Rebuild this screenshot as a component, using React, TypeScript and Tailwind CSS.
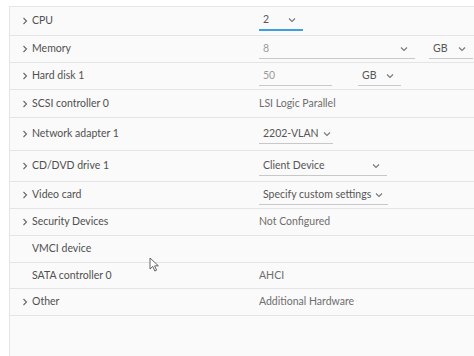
import React from 'react';

const Chevron = ({ className = '' }: { className?: string }) => (
  <svg width="8" height="6" viewBox="0 0 8 6" className={className}>
    <path d="M1 1.5 L4 4.5 L7 1.5" fill="none" stroke="currentColor" strokeWidth="1.1" />
  </svg>
);

const Caret = () => (
  <svg width="6" height="8" viewBox="0 0 6 8" className="text-[#666]">
    <path d="M1.5 1 L4.5 4 L1.5 7" fill="none" stroke="currentColor" strokeWidth="1.1" />
  </svg>
);

const Select = ({ value, width, active = false, muted = false }: { value: string; width: string; active?: boolean; muted?: boolean }) => (
  <div
    className={`flex shrink-0 items-center justify-between whitespace-nowrap pl-1 pr-[7px] h-[19px] ${width} ${
      active ? 'border-b-2 border-[#3f9fe0]' : 'border-b border-[#c8c8c8]'
    }`}
  >
    <span className={muted ? 'text-[#9a9a9a]' : 'text-[#565656]'}>{value}</span>
    <Chevron className="text-[#777] ml-1 shrink-0" />
  </div>
);

const Input = ({ value, width }: { value: string; width: string }) => (
  <div className={`flex shrink-0 items-center pl-1 h-[19px] ${width} border-b border-[#c8c8c8] text-[#9a9a9a]`}>{value}</div>
);

type Row = { label: string; h: string; expand: boolean; value: React.ReactNode };

const rows: Row[] = [
  { label: 'CPU', h: 'h-[29px]', expand: true, value: <Select value="2" width="w-[44px]" active /> },
  {
    label: 'Memory',
    h: 'h-[27px]',
    expand: true,
    value: (
      <div className="flex items-center gap-[14px]">
        <Select value="8" width="w-[156px]" muted />
        <Select value="GB" width="w-[44px]" />
      </div>
    ),
  },
  {
    label: 'Hard disk 1',
    h: 'h-[27px]',
    expand: true,
    value: (
      <div className="flex items-center gap-[26px]">
        <Input value="50" width="w-[73px]" />
        <Select value="GB" width="w-[43px]" />
      </div>
    ),
  },
  { label: 'SCSI controller 0', h: 'h-[28px]', expand: true, value: <span className="text-[#6e6e6e]">LSI Logic Parallel</span> },
  { label: 'Network adapter 1', h: 'h-[33px]', expand: true, value: <Select value="2202-VLAN" width="w-[74px]" /> },
  { label: 'CD/DVD drive 1', h: 'h-[31px]', expand: true, value: <Select value="Client Device" width="w-[128px]" /> },
  { label: 'Video card', h: 'h-[27px]', expand: true, value: <Select value="Specify custom settings" width="w-[129px]" /> },
  { label: 'Security Devices', h: 'h-[27px]', expand: true, value: <span className="text-[#6e6e6e]">Not Configured</span> },
  { label: 'VMCI device', h: 'h-[27px]', expand: false, value: null },
  { label: 'SATA controller 0', h: 'h-[26px]', expand: false, value: <span className="text-[#6e6e6e]">AHCI</span> },
  { label: 'Other', h: 'h-[27px]', expand: true, value: <span className="text-[#6e6e6e]">Additional Hardware</span> },
];

const App = () => {
  return (
    <div className="w-[474px] h-[356px] bg-white pl-[9px] pt-[6px] overflow-hidden relative" style={{ fontFamily: 'Lato, "Open Sans", sans-serif' }}>
      <div className="h-[400px] bg-[#fafafa] border-l border-t border-[#e6e6e6] text-[10.5px] text-[#505050]">
        {rows.map((r) => (
          <div key={r.label} className={`flex items-center whitespace-nowrap ${r.h} border-b border-[#e4e4e4]`}>
            <div className="w-[249px] shrink-0 flex items-center pl-[12px]">
              <span className="w-[10px] flex">{r.expand && <Caret />}</span>
              <span>{r.label}</span>
            </div>
            <div className="flex">{r.value}</div>
          </div>
        ))}
      </div>
      {/* mouse pointer */}
      <svg width="12" height="16" viewBox="0 0 12 16" className="absolute left-[149px] top-[257px]">
        <path d="M1 1 L1 12 L3.8 9.4 L5.8 14 L7.6 13.2 L5.6 8.8 L9.4 8.8 Z" fill="white" stroke="#555" strokeWidth="0.9" />
      </svg>
    </div>
  );
};

export default App;
